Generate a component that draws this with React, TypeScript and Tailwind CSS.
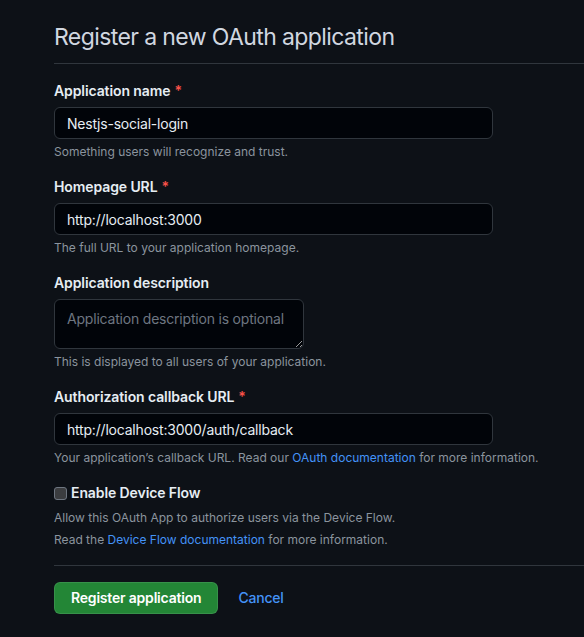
const font = { fontFamily: "Inter, 'Noto Sans', sans-serif" };

function Label({ children, required }: { children: string; required?: boolean }) {
  return (
    <label className="block text-sm leading-5 font-semibold text-[#e6edf3] mb-1.5 tracking-[-0.1px]">
      {children}
      {required && <span className="text-[#f85149] ml-1">*</span>}
    </label>
  );
}

function Hint({ children }: { children: React.ReactNode }) {
  return <p className="mt-1 text-xs leading-[18px] text-[#8b949e]">{children}</p>;
}

const inputCls =
  "block w-[439px] h-8 px-3 rounded-md border border-[#30363d] bg-[#010409] text-sm tracking-[-0.2px] text-[#e6edf3] outline-none";

export default function App() {
  return (
    <div className="min-h-screen bg-[#0d1117] pl-[54px] pt-[22px]" style={font}>
      <h1 className="text-[23px] tracking-[-0.6px] leading-[30px] font-normal text-[#d1d7e0] pb-[11px] border-b border-[#30363d]">
        Register a new OAuth application
      </h1>
      <form className="pt-[17px]">
        <div>
          <Label required>Application name</Label>
          <input className={inputCls} defaultValue="Nestjs-social-login" />
          <Hint>Something users will recognize and trust.</Hint>
        </div>
        <div className="mt-4">
          <Label required>Homepage URL</Label>
          <input className={inputCls} defaultValue="http://localhost:3000" />
          <Hint>The full URL to your application homepage.</Hint>
        </div>
        <div className="mt-4">
          <Label>Application description</Label>
          <textarea
            className="block w-[250px] h-[50px] px-3 py-[9px] rounded-md border border-[#30363d] bg-[#010409] text-sm tracking-[-0.2px] leading-5 text-[#e6edf3] placeholder:text-[#6e7681] outline-none"
            placeholder="Application description is optional"
          />
          <Hint>This is displayed to all users of your application.</Hint>
        </div>
        <div className="mt-4">
          <Label required>Authorization callback URL</Label>
          <input className={inputCls} defaultValue="http://localhost:3000/auth/callback" />
          <Hint>
            Your application’s callback URL. Read our{" "}
            <a className="text-[#4493f8]">OAuth documentation</a> for more information.
          </Hint>
        </div>
        <div className="mt-4">
          <label className="flex items-center h-5 text-sm font-semibold tracking-[-0.1px] text-[#e6edf3]">
            <span className="w-[13px] h-[13px] rounded-[3px] border border-[#6e7681] bg-[#3b3d40] mr-1" />
            Enable Device Flow
          </label>
          <p className="mt-[6px] text-xs leading-[18px] text-[#8b949e]">
            Allow this OAuth App to authorize users via the Device Flow.
          </p>
          <p className="mt-[4px] text-xs leading-[18px] text-[#8b949e]">
            Read the <a className="text-[#4493f8]">Device Flow documentation</a> for more information.
          </p>
        </div>
        <div className="mt-4 border-t border-[#30363d] pt-4 flex items-center">
          <button
            type="button"
            className="h-8 px-4 rounded-md bg-[#238636] border border-[#f0f6fc1a] text-sm font-semibold tracking-[-0.2px] text-white"
          >
            Register application
          </button>
          <a className="ml-[20px] text-sm font-medium tracking-[-0.2px] text-[#4493f8]">Cancel</a>
        </div>
      </form>
    </div>
  );
}
